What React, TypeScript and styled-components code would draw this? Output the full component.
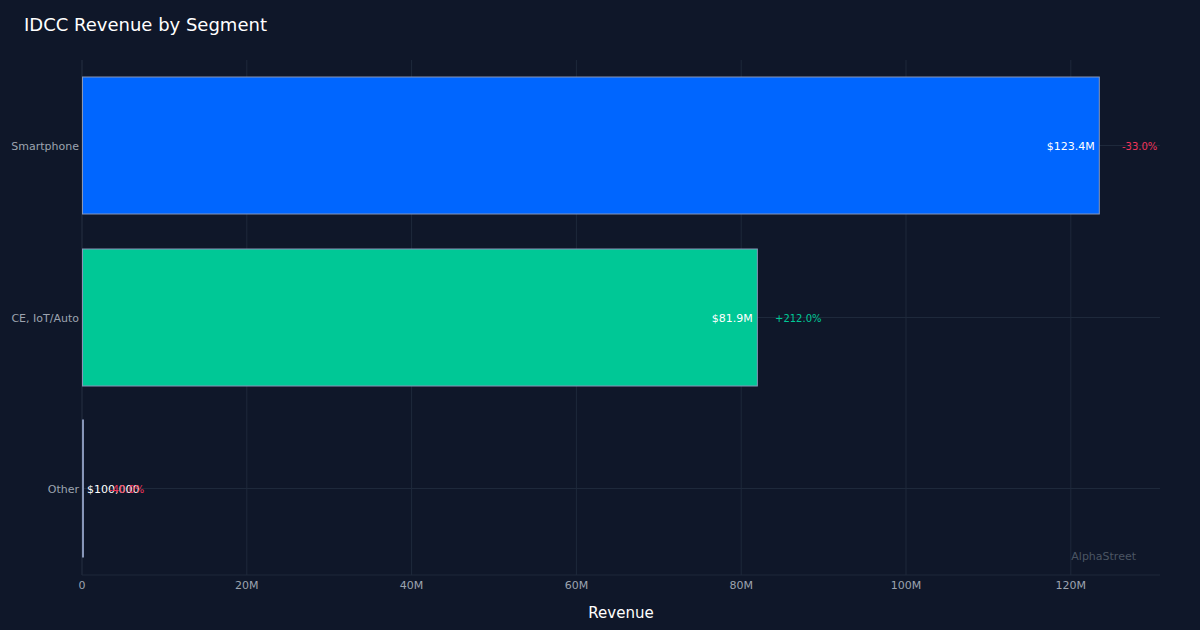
import React from "react";
import styled, { createGlobalStyle } from "styled-components";

const Global = createGlobalStyle`
  html, body { margin: 0; padding: 0; background: #0f1729; }
  * { box-sizing: border-box; }
`;

const Page = styled.div`
  width: 1200px;
  height: 630px;
  background: #0f1729;
  font-family: "DejaVu Sans", "Liberation Sans", sans-serif;
  display: flex;
  flex-direction: column;
`;

const Title = styled.h1`
  margin: 0;
  padding: 14px 0 0 24px;
  height: 40px;
  font-size: 18px;
  font-weight: 400;
  color: #ffffff;
`;

const Chart = styled.svg`
  display: block;
  width: 1200px;
  height: 590px;
`;

const x0 = 82;
const pxPerM = 8.24;
const X = (m: number) => x0 + m * pxPerM;
const oy = 40;

const rows = [
  { name: "Smartphone", value: 123.4, label: "$123.4M", pct: "-33.0%", pctColor: "#f0345a", color: "#0066ff", top: 77, pctX: 1122 },
  { name: "CE, IoT/Auto", value: 81.9, label: "$81.9M", pct: "+212.0%", pctColor: "#00c896", color: "#00c896", top: 249, pctX: 775 },
  { name: "Other", value: 0.1, label: "$100,000", pct: "-40.0%", pctColor: "#f0345a", color: "#cbd5e1", top: 420, pctX: 109 },
];

export default function App() {
  const ticks = [0, 20, 40, 60, 80, 100, 120];
  const barH = 137;
  return (
    <Page>
      <Global />
      <Title>IDCC Revenue by Segment</Title>
      <Chart viewBox={`0 ${oy} 1200 590`}>
        {ticks.map((t) => (
          <line key={t} x1={X(t)} x2={X(t)} y1={60} y2={575} stroke="#1e293b" strokeWidth={1} />
        ))}
        {rows.map((r) => (
          <line key={r.name} x1={x0} x2={1160} y1={r.top + barH / 2} y2={r.top + barH / 2} stroke="#1e293b" />
        ))}
        <line x1={x0} x2={1160} y1={575} y2={575} stroke="#1e293b" />
        <line x1={x0} x2={x0} y1={60} y2={575} stroke="#1e293b" />
        {rows.map((r) => {
          const w = Math.max(X(r.value) - x0, 1);
          const cy = r.top + barH / 2 + 4;
          const inside = r.value > 10;
          return (
            <g key={r.name}>
              <rect x={x0 + 0.5} y={r.top} width={w} height={barH} fill={r.color} stroke="#8796b8" strokeWidth={1} />
              <text x={79} y={cy} textAnchor="end" fontSize={11} fill="#9ca3af">{r.name}</text>
              {inside ? (
                <text x={X(r.value) - 4} y={cy} textAnchor="end" fontSize={11} fill="#ffffff">{r.label}</text>
              ) : (
                <text x={87} y={cy} fontSize={11} fill="#ffffff">{r.label}</text>
              )}
              <text x={r.pctX} y={cy} fontSize={10} fill={r.pctColor}>{r.pct}</text>
            </g>
          );
        })}
        {ticks.map((t) => (
          <text key={t} x={X(t)} y={589} textAnchor="middle" fontSize={11} fill="#9ca3af">{t === 0 ? "0" : `${t}M`}</text>
        ))}
        <text x={621} y={618} textAnchor="middle" fontSize={15} fill="#ffffff">Revenue</text>
        <text x={1136} y={560} textAnchor="end" fontSize={11} fill="#4b5563">AlphaStreet</text>
      </Chart>
    </Page>
  );
}
